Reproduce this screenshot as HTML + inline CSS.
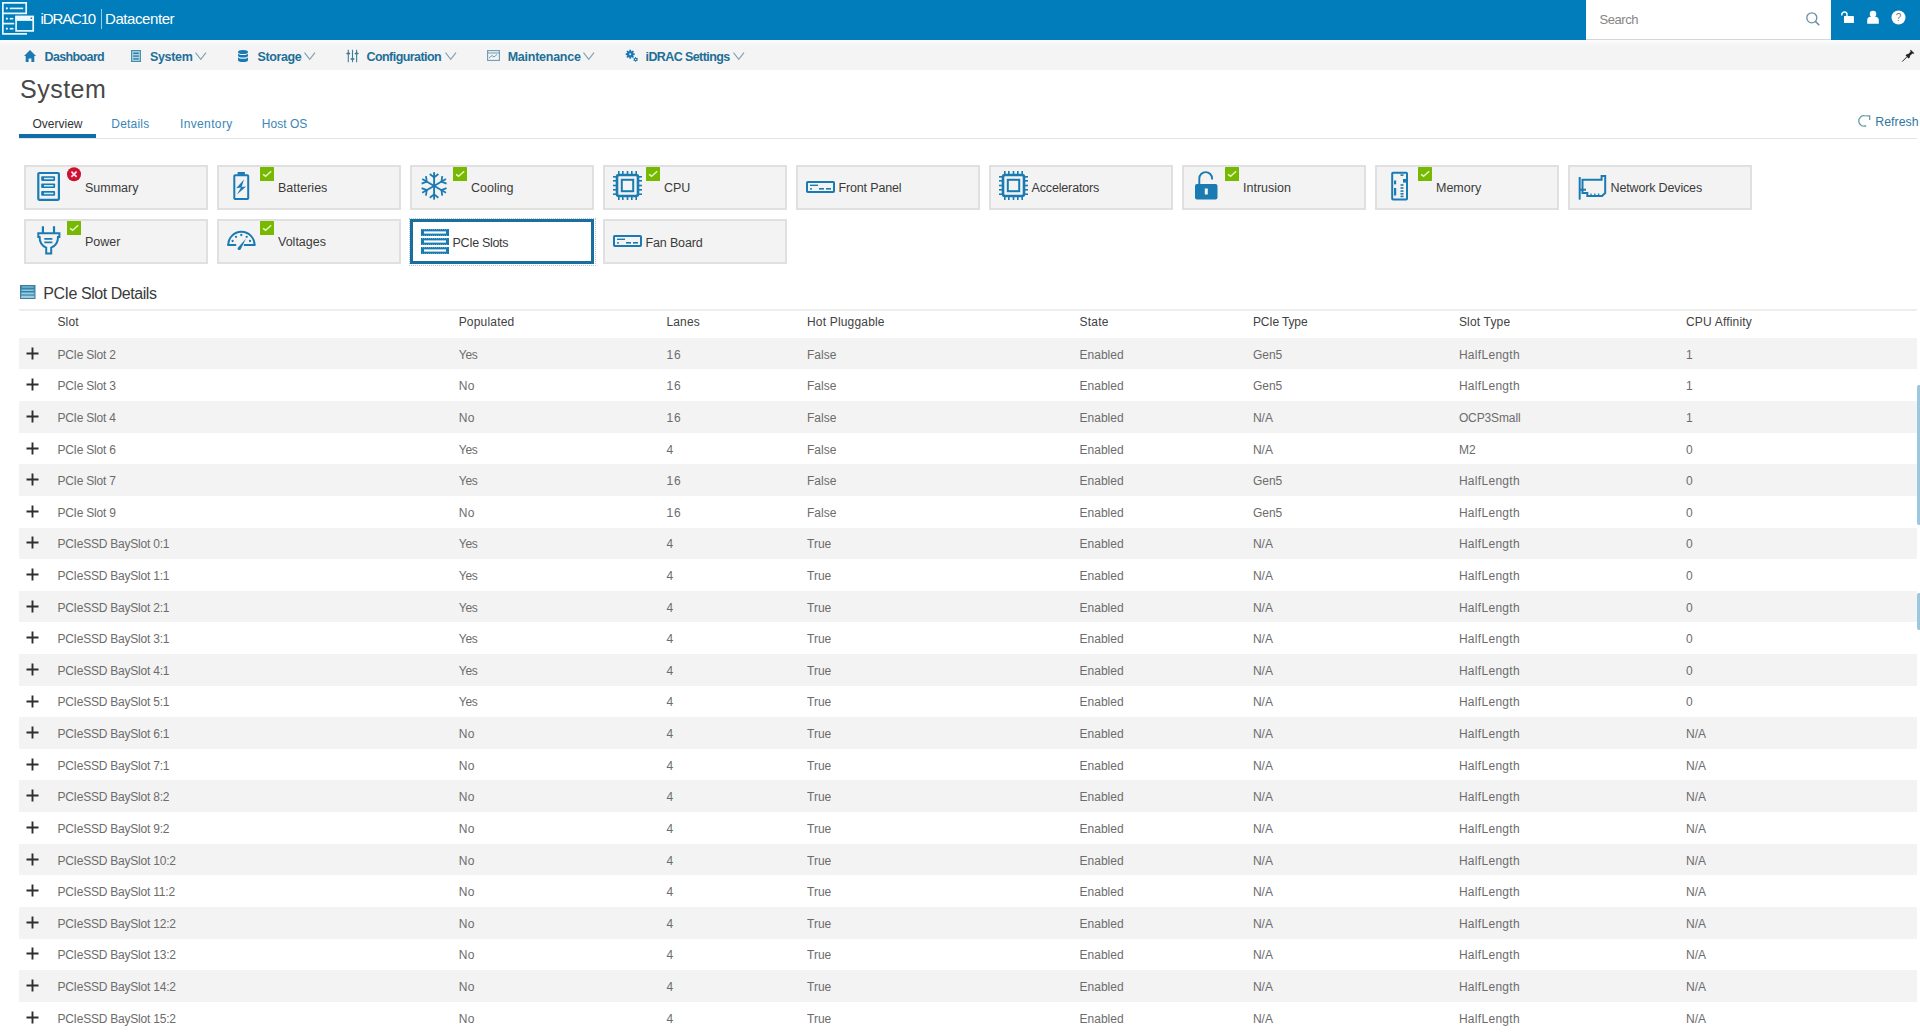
<!DOCTYPE html>
<html><head><meta charset="utf-8"><title>iDRAC10 System</title>
<style>
html,body{margin:0;padding:0;}
body{width:1920px;height:1035px;overflow:hidden;position:relative;background:#fff;font-family:"Liberation Sans", sans-serif;}
.t{position:absolute;white-space:nowrap;line-height:1;}
svg{overflow:visible}
</style></head><body>
<div style="position:absolute;left:0px;top:0px;width:1920px;height:40px;background:#017dbb"></div>
<svg style="position:absolute;left:2px;top:2px" width="34" height="34" viewBox="0 0 34 34"><g fill="none" stroke="#eaf8ff" stroke-width="1.7">
<path d="M0.85 11.4 V0.85 H24.2 V11.4 Z"/><path d="M0.85 11.4 V31.9 H25"/><path d="M0.85 21.6 H12.2"/>
<rect x="14.1" y="14.6" width="17.1" height="14.3"/>
</g>
<g fill="#eaf8ff"><rect x="3.9" y="5.4" width="1.9" height="1.9"/><rect x="7.7" y="5.6" width="13.5" height="1.6"/>
<rect x="3.9" y="15.7" width="1.9" height="1.9"/><rect x="7.7" y="15.9" width="3.5" height="1.6"/>
<rect x="3.9" y="25.7" width="1.9" height="1.9"/><rect x="7.7" y="25.9" width="3.8" height="1.6"/>
<rect x="13.3" y="13.8" width="18.7" height="5.1"/></g>
<rect x="28.6" y="15.5" width="1.5" height="1.5" fill="#2a6f96"/></svg>
<div class="t" style="left:40.6px;top:11.30px;font-size:15px;color:#fff;font-weight:400;letter-spacing:-1.15px;">iDRAC10</div>
<div style="position:absolute;left:101px;top:9px;width:1px;height:20px;background:rgba(255,255,255,.6)"></div>
<div class="t" style="left:105px;top:11.30px;font-size:15px;color:#fff;font-weight:400;letter-spacing:-0.42px;">Datacenter</div>
<div style="position:absolute;left:1586px;top:0px;width:245px;height:39px;background:#fff;border-bottom:1px solid #d6d6d6"></div>
<div class="t" style="left:1599.5px;top:13.00px;font-size:13px;color:#858585;font-weight:400;letter-spacing:-0.45px;">Search</div>
<svg style="position:absolute;left:1806px;top:12px" width="14" height="14" viewBox="0 0 14 14"><circle cx="5.8" cy="5.8" r="5" fill="none" stroke="#6a8fa3" stroke-width="1.3"/><path d="M9.4 9.4 L13.3 13.3" stroke="#6a8fa3" stroke-width="1.5"/></svg>
<svg style="position:absolute;left:1840px;top:11px" width="15" height="13" viewBox="0 0 15 13"><path d="M1.8 4.5 V3.6 a2.6 2.6 0 0 1 5.2 0 V5.5" fill="none" stroke="#fff" stroke-width="1.4"/><rect x="4" y="5.1" width="9.9" height="6.9" rx="0.6" fill="#fff"/></svg>
<svg style="position:absolute;left:1867px;top:10px" width="12" height="14" viewBox="0 0 12 14"><circle cx="6" cy="3.9" r="3.25" fill="#fff"/><path d="M0.2 13.8 V10.3 a3.6 3.6 0 0 1 3.6 -3.6 h4.4 a3.6 3.6 0 0 1 3.6 3.6 V13.8z" fill="#fff"/></svg>
<svg style="position:absolute;left:1891px;top:10px" width="15" height="15" viewBox="0 0 15 15"><circle cx="7.5" cy="7.5" r="7" fill="#fff"/><text x="7.5" y="11.3" text-anchor="middle" font-family="Liberation Sans" font-size="10" font-weight="400" fill="#7a7a7a">?</text></svg>
<div style="position:absolute;left:0px;top:40px;width:1920px;height:30px;background:linear-gradient(#fbfdfe 0px,#f7f8f9 3px,#f4f4f4 6px)"></div>
<svg style="position:absolute;left:24px;top:50px" width="12" height="12" viewBox="0 0 12 12"><path d="M6 0 L12 6 H10.3 V12 H7.4 V8.4 H4.6 V12 H1.7 V6 H0 Z" fill="#1a78b4"/></svg>
<div class="t" style="left:44.5px;top:51.22px;font-size:12.5px;color:#216e98;font-weight:700;letter-spacing:-0.63px;">Dashboard</div>
<svg style="position:absolute;left:131px;top:50px" width="10" height="12" viewBox="0 0 10 12"><rect x="0.6" y="0.6" width="8.8" height="10.8" fill="#b4def0" stroke="#4a8fa8" stroke-width="1.2"/><rect x="2.2" y="2.5" width="5.6" height="1.6" fill="#2f7f98"/><rect x="2.2" y="5.3" width="5.6" height="1.6" fill="#4a7fb8"/><rect x="2.2" y="8.1" width="5.6" height="1.6" fill="#2f8f98"/></svg>
<div class="t" style="left:150px;top:51.22px;font-size:12.5px;color:#216e98;font-weight:700;letter-spacing:-0.34px;">System</div>
<svg style="position:absolute;left:195px;top:52px" width="12" height="9" viewBox="0 0 12 9"><path d="M0.5 0.6 L5.75 7.4 L11 0.6" fill="none" stroke="#7f9fb2" stroke-width="1.1"/></svg>
<svg style="position:absolute;left:238px;top:50px" width="10" height="12" viewBox="0 0 10 12"><ellipse cx="5" cy="2" rx="5" ry="2" fill="#1a78b4"/><path d="M0 3 V5.5 a5 2 0 0 0 10 0 V3 a5 2 0 0 1 -10 0z" fill="#1a78b4"/><path d="M0 6.8 V10 a5 2 0 0 0 10 0 V6.8 a5 2 0 0 1 -10 0z" fill="#1a78b4"/></svg>
<div class="t" style="left:257.5px;top:51.22px;font-size:12.5px;color:#216e98;font-weight:700;letter-spacing:-0.38px;">Storage</div>
<svg style="position:absolute;left:304px;top:52px" width="12" height="9" viewBox="0 0 12 9"><path d="M0.5 0.6 L5.75 7.4 L11 0.6" fill="none" stroke="#7f9fb2" stroke-width="1.1"/></svg>
<svg style="position:absolute;left:346px;top:49px" width="13" height="14" viewBox="0 0 13 14"><g stroke="#3f7d96" stroke-width="1.1"><path d="M2.3 0.8 V13.2"/><path d="M6.5 0.8 V13.2"/><path d="M10.6 0.8 V13.2"/></g><g fill="#3f7d96"><ellipse cx="2.3" cy="4.5" rx="2.1" ry="1.1"/><ellipse cx="6.5" cy="10" rx="2.1" ry="1.1"/><ellipse cx="10.6" cy="4.5" rx="2.1" ry="1.1"/></g></svg>
<div class="t" style="left:366.5px;top:51.22px;font-size:12.5px;color:#216e98;font-weight:700;letter-spacing:-0.56px;">Configuration</div>
<svg style="position:absolute;left:445px;top:52px" width="12" height="9" viewBox="0 0 12 9"><path d="M0.5 0.6 L5.75 7.4 L11 0.6" fill="none" stroke="#7f9fb2" stroke-width="1.1"/></svg>
<svg style="position:absolute;left:487px;top:50px" width="13" height="11" viewBox="0 0 13 11"><rect x="0.6" y="0.6" width="11.8" height="9.8" fill="none" stroke="#6b9ab6" stroke-width="1.1"/><path d="M0.6 3 H12.4" stroke="#6b9ab6" stroke-width="1"/><path d="M2 8 L5 5.5 L7 7 L10 4.5" fill="none" stroke="#6b9ab6" stroke-width="1"/></svg>
<div class="t" style="left:507.7px;top:51.22px;font-size:12.5px;color:#216e98;font-weight:700;letter-spacing:-0.25px;">Maintenance</div>
<svg style="position:absolute;left:583px;top:52px" width="12" height="9" viewBox="0 0 12 9"><path d="M0.5 0.6 L5.75 7.4 L11 0.6" fill="none" stroke="#7f9fb2" stroke-width="1.1"/></svg>
<svg style="position:absolute;left:625px;top:49px" width="14" height="14" viewBox="0 0 14 14"><circle cx="5.2" cy="5.2" r="3.3" fill="#1a78b4"/><rect x="4.30" y="0.70" width="1.8" height="1.6" fill="#1a78b4" transform="rotate(0.0 5.2 5.2)"/><rect x="4.30" y="0.70" width="1.8" height="1.6" fill="#1a78b4" transform="rotate(45.0 5.2 5.2)"/><rect x="4.30" y="0.70" width="1.8" height="1.6" fill="#1a78b4" transform="rotate(90.0 5.2 5.2)"/><rect x="4.30" y="0.70" width="1.8" height="1.6" fill="#1a78b4" transform="rotate(135.0 5.2 5.2)"/><rect x="4.30" y="0.70" width="1.8" height="1.6" fill="#1a78b4" transform="rotate(180.0 5.2 5.2)"/><rect x="4.30" y="0.70" width="1.8" height="1.6" fill="#1a78b4" transform="rotate(225.0 5.2 5.2)"/><rect x="4.30" y="0.70" width="1.8" height="1.6" fill="#1a78b4" transform="rotate(270.0 5.2 5.2)"/><rect x="4.30" y="0.70" width="1.8" height="1.6" fill="#1a78b4" transform="rotate(315.0 5.2 5.2)"/><circle cx="5.2" cy="5.2" r="1.0" fill="#f4f4f4"/><circle cx="10.6" cy="10.4" r="1.7" fill="#1a78b4"/><rect x="10.05" y="8.10" width="1.1" height="1.0" fill="#1a78b4" transform="rotate(0.0 10.6 10.4)"/><rect x="10.05" y="8.10" width="1.1" height="1.0" fill="#1a78b4" transform="rotate(60.0 10.6 10.4)"/><rect x="10.05" y="8.10" width="1.1" height="1.0" fill="#1a78b4" transform="rotate(120.0 10.6 10.4)"/><rect x="10.05" y="8.10" width="1.1" height="1.0" fill="#1a78b4" transform="rotate(180.0 10.6 10.4)"/><rect x="10.05" y="8.10" width="1.1" height="1.0" fill="#1a78b4" transform="rotate(240.0 10.6 10.4)"/><rect x="10.05" y="8.10" width="1.1" height="1.0" fill="#1a78b4" transform="rotate(300.0 10.6 10.4)"/><circle cx="10.6" cy="10.4" r="0.6" fill="#f4f4f4"/></svg>
<div class="t" style="left:645.5px;top:51.22px;font-size:12.5px;color:#216e98;font-weight:700;letter-spacing:-0.59px;">iDRAC Settings</div>
<svg style="position:absolute;left:733px;top:52px" width="12" height="9" viewBox="0 0 12 9"><path d="M0.5 0.6 L5.75 7.4 L11 0.6" fill="none" stroke="#7f9fb2" stroke-width="1.1"/></svg>
<svg style="position:absolute;left:1901px;top:48px" width="15" height="15" viewBox="0 0 15 15"><path d="M1.2 13.6 L6.4 8.4" stroke="#262626" stroke-width="1"/><path d="M4.6 7.4 L7.6 10.4 L8.6 9.8 L9.2 7.4 L11.6 5.4 L12.8 5.8 L13.3 5.2 L9.8 1.7 L9.2 2.2 L9.6 3.4 L7.6 5.8 L5.2 6.4 Z" fill="#262626"/></svg>
<div class="t" style="left:20px;top:77.14px;font-size:25px;color:#484848;font-weight:400;letter-spacing:0.5px;">System</div>
<div class="t" style="left:32.5px;top:118.14px;font-size:12px;color:#333;font-weight:400;letter-spacing:0px;">Overview</div>
<div class="t" style="left:111.3px;top:118.14px;font-size:12px;color:#3b86b6;font-weight:400;letter-spacing:0.2px;">Details</div>
<div class="t" style="left:180px;top:118.14px;font-size:12px;color:#3b86b6;font-weight:400;letter-spacing:0.36px;">Inventory</div>
<div class="t" style="left:261.7px;top:118.14px;font-size:12px;color:#3b86b6;font-weight:400;letter-spacing:0.05px;">Host OS</div>
<div style="position:absolute;left:19px;top:138px;width:1898px;height:1px;background:#e4e4e4"></div>
<div style="position:absolute;left:19px;top:134px;width:77px;height:4px;background:#0e6fa8"></div>
<svg style="position:absolute;left:1857px;top:114px" width="15" height="14" viewBox="0 0 15 14"><path d="M9.2 11.6 A5.2 5.2 0 1 1 8.3 1.9" fill="none" stroke="#6b9aab" stroke-width="1.3"/><path d="M8.6 1.9 H12.7 V5.9" fill="none" stroke="#6b9aab" stroke-width="1.3"/></svg>
<div class="t" style="left:1875.3px;top:115.79px;font-size:12.3px;color:#2f77a0;font-weight:400;letter-spacing:0.05px;">Refresh</div>
<div style="position:absolute;left:24px;top:165px;width:184px;height:45px;box-sizing:border-box;border:2px solid #e0e0e0;background:#f3f3f3"></div>
<svg style="position:absolute;left:37px;top:171px" width="24" height="30" viewBox="0 0 24 30"><rect x="1.3" y="2" width="20.6" height="26.8" rx="1" fill="none" stroke="#1a7bb2" stroke-width="2.2"/><rect x="4.2" y="5.2" width="13.9" height="4.7" rx="0.8" fill="#1a7bb2"/><rect x="7" y="6.800000000000001" width="9.4" height="1.5" fill="#c9eefc"/><rect x="4.2" y="12.4" width="13.9" height="4.7" rx="0.8" fill="#1a7bb2"/><rect x="7" y="14.0" width="9.4" height="1.5" fill="#c9eefc"/><rect x="4.2" y="20.1" width="13.9" height="4.7" rx="0.8" fill="#1a7bb2"/><rect x="7" y="21.700000000000003" width="9.4" height="1.5" fill="#c9eefc"/></svg>
<svg style="position:absolute;left:66.6px;top:166.8px" width="15" height="15" viewBox="0 0 15 15"><circle cx="7" cy="7.3" r="7" fill="#cc1230"/><path d="M4.4 4.7 L9.6 9.9 M9.6 4.7 L4.4 9.9" stroke="#fde" stroke-width="1.8"/></svg>
<div class="t" style="left:85px;top:181.62px;font-size:12.5px;color:#3a3a3a;font-weight:400;letter-spacing:0px;">Summary</div>
<div style="position:absolute;left:217px;top:165px;width:184px;height:45px;box-sizing:border-box;border:2px solid #e0e0e0;background:#f3f3f3"></div>
<svg style="position:absolute;left:232px;top:171px" width="19" height="30" viewBox="0 0 19 30"><rect x="5.6" y="1" width="7.3" height="2.8" fill="#1a7bb2"/><rect x="2.3" y="4.3" width="13.9" height="23.7" rx="0.8" fill="none" stroke="#1a7bb2" stroke-width="2"/><path d="M12 8.6 L4.2 17.2 L9 16.4 L5 23.6 L14.1 15.4 L9.6 16 Z" fill="#1a7bb2"/></svg>
<svg style="position:absolute;left:259.6px;top:166.8px" width="14" height="14" viewBox="0 0 14 14"><rect width="14" height="14" rx="0.5" fill="#76b900"/><path d="M3.1 7.3 L5.6 9.2 L11.2 4.3" fill="none" stroke="#e4f7c4" stroke-width="1.5"/></svg>
<div class="t" style="left:278px;top:181.62px;font-size:12.5px;color:#3a3a3a;font-weight:400;letter-spacing:0px;">Batteries</div>
<div style="position:absolute;left:410px;top:165px;width:184px;height:45px;box-sizing:border-box;border:2px solid #e0e0e0;background:#f3f3f3"></div>
<svg style="position:absolute;left:420px;top:171px" width="29" height="30" viewBox="0 0 29 30"><g transform="rotate(0 14.1 14.9)"><path d="M14.1 1.2 V28.6" stroke="#1a7bb2" stroke-width="1.9"/><path d="M9.8 3 L14.1 6.4 L18.4 3 M9.8 26.8 L14.1 23.4 L18.4 26.8" fill="none" stroke="#1a7bb2" stroke-width="1.8"/></g><g transform="rotate(60 14.1 14.9)"><path d="M14.1 1.2 V28.6" stroke="#1a7bb2" stroke-width="1.9"/><path d="M9.8 3 L14.1 6.4 L18.4 3 M9.8 26.8 L14.1 23.4 L18.4 26.8" fill="none" stroke="#1a7bb2" stroke-width="1.8"/></g><g transform="rotate(120 14.1 14.9)"><path d="M14.1 1.2 V28.6" stroke="#1a7bb2" stroke-width="1.9"/><path d="M9.8 3 L14.1 6.4 L18.4 3 M9.8 26.8 L14.1 23.4 L18.4 26.8" fill="none" stroke="#1a7bb2" stroke-width="1.8"/></g></svg>
<svg style="position:absolute;left:452.6px;top:166.8px" width="14" height="14" viewBox="0 0 14 14"><rect width="14" height="14" rx="0.5" fill="#76b900"/><path d="M3.1 7.3 L5.6 9.2 L11.2 4.3" fill="none" stroke="#e4f7c4" stroke-width="1.5"/></svg>
<div class="t" style="left:471px;top:181.62px;font-size:12.5px;color:#3a3a3a;font-weight:400;letter-spacing:0px;">Cooling</div>
<div style="position:absolute;left:603px;top:165px;width:184px;height:45px;box-sizing:border-box;border:2px solid #e0e0e0;background:#f3f3f3"></div>
<svg style="position:absolute;left:612.5px;top:171px" width="29" height="29" viewBox="0 0 29 29"><rect x="5" y="0" width="1.6" height="3" fill="#1a7bb2"/><rect x="5" y="26" width="1.6" height="3" fill="#1a7bb2"/><rect x="0" y="5" width="3" height="1.6" fill="#1a7bb2"/><rect x="26" y="5" width="3" height="1.6" fill="#1a7bb2"/><rect x="9" y="0" width="1.6" height="3" fill="#1a7bb2"/><rect x="9" y="26" width="1.6" height="3" fill="#1a7bb2"/><rect x="0" y="9" width="3" height="1.6" fill="#1a7bb2"/><rect x="26" y="9" width="3" height="1.6" fill="#1a7bb2"/><rect x="13.7" y="0" width="1.6" height="3" fill="#1a7bb2"/><rect x="13.7" y="26" width="1.6" height="3" fill="#1a7bb2"/><rect x="0" y="13.7" width="3" height="1.6" fill="#1a7bb2"/><rect x="26" y="13.7" width="3" height="1.6" fill="#1a7bb2"/><rect x="18" y="0" width="1.6" height="3" fill="#1a7bb2"/><rect x="18" y="26" width="1.6" height="3" fill="#1a7bb2"/><rect x="0" y="18" width="3" height="1.6" fill="#1a7bb2"/><rect x="26" y="18" width="3" height="1.6" fill="#1a7bb2"/><rect x="22.4" y="0" width="1.6" height="3" fill="#1a7bb2"/><rect x="22.4" y="26" width="1.6" height="3" fill="#1a7bb2"/><rect x="0" y="22.4" width="3" height="1.6" fill="#1a7bb2"/><rect x="26" y="22.4" width="3" height="1.6" fill="#1a7bb2"/><rect x="4" y="4" width="21" height="21" rx="2" fill="none" stroke="#1a7bb2" stroke-width="2.6"/><rect x="8.8" y="8.8" width="11.4" height="11.4" fill="none" stroke="#1a7bb2" stroke-width="2"/></svg>
<svg style="position:absolute;left:645.6px;top:166.8px" width="14" height="14" viewBox="0 0 14 14"><rect width="14" height="14" rx="0.5" fill="#76b900"/><path d="M3.1 7.3 L5.6 9.2 L11.2 4.3" fill="none" stroke="#e4f7c4" stroke-width="1.5"/></svg>
<div class="t" style="left:664px;top:181.62px;font-size:12.5px;color:#3a3a3a;font-weight:400;letter-spacing:0px;">CPU</div>
<div style="position:absolute;left:796px;top:165px;width:184px;height:45px;box-sizing:border-box;border:2px solid #e0e0e0;background:#f3f3f3"></div>
<svg style="position:absolute;left:805.5px;top:180.5px" width="29" height="12" viewBox="0 0 29 12"><rect x="1" y="1" width="27" height="10" rx="0.8" fill="none" stroke="#1a7bb2" stroke-width="2"/><rect x="4" y="3.6" width="8" height="1.4" fill="#1a7bb2"/><rect x="4" y="7.2" width="2" height="1.4" fill="#1a7bb2"/><rect x="13" y="7" width="5" height="1.6" fill="#1a7bb2"/><rect x="20" y="7" width="5" height="1.6" fill="#1a7bb2"/></svg>
<div class="t" style="left:838.5px;top:182.02px;font-size:12.5px;color:#3a3a3a;font-weight:400;letter-spacing:-0.15px;">Front Panel</div>
<div style="position:absolute;left:989px;top:165px;width:184px;height:45px;box-sizing:border-box;border:2px solid #e0e0e0;background:#f3f3f3"></div>
<svg style="position:absolute;left:998.5px;top:171px" width="29" height="29" viewBox="0 0 29 29"><rect x="5" y="0" width="1.6" height="3" fill="#1a7bb2"/><rect x="5" y="26" width="1.6" height="3" fill="#1a7bb2"/><rect x="0" y="5" width="3" height="1.6" fill="#1a7bb2"/><rect x="26" y="5" width="3" height="1.6" fill="#1a7bb2"/><rect x="9" y="0" width="1.6" height="3" fill="#1a7bb2"/><rect x="9" y="26" width="1.6" height="3" fill="#1a7bb2"/><rect x="0" y="9" width="3" height="1.6" fill="#1a7bb2"/><rect x="26" y="9" width="3" height="1.6" fill="#1a7bb2"/><rect x="13.7" y="0" width="1.6" height="3" fill="#1a7bb2"/><rect x="13.7" y="26" width="1.6" height="3" fill="#1a7bb2"/><rect x="0" y="13.7" width="3" height="1.6" fill="#1a7bb2"/><rect x="26" y="13.7" width="3" height="1.6" fill="#1a7bb2"/><rect x="18" y="0" width="1.6" height="3" fill="#1a7bb2"/><rect x="18" y="26" width="1.6" height="3" fill="#1a7bb2"/><rect x="0" y="18" width="3" height="1.6" fill="#1a7bb2"/><rect x="26" y="18" width="3" height="1.6" fill="#1a7bb2"/><rect x="22.4" y="0" width="1.6" height="3" fill="#1a7bb2"/><rect x="22.4" y="26" width="1.6" height="3" fill="#1a7bb2"/><rect x="0" y="22.4" width="3" height="1.6" fill="#1a7bb2"/><rect x="26" y="22.4" width="3" height="1.6" fill="#1a7bb2"/><rect x="4" y="4" width="21" height="21" rx="2" fill="none" stroke="#1a7bb2" stroke-width="2.6"/><rect x="8.8" y="8.8" width="11.4" height="11.4" fill="none" stroke="#1a7bb2" stroke-width="2"/></svg>
<div class="t" style="left:1031.5px;top:182.02px;font-size:12.5px;color:#3a3a3a;font-weight:400;letter-spacing:-0.15px;">Accelerators</div>
<div style="position:absolute;left:1182px;top:165px;width:184px;height:45px;box-sizing:border-box;border:2px solid #e0e0e0;background:#f3f3f3"></div>
<svg style="position:absolute;left:1194.5px;top:171px" width="23" height="29" viewBox="0 0 23 29"><path d="M4.3 13 V7.5 a6.4 6.4 0 0 1 12.8 0 V8.5" fill="none" stroke="#1a7bb2" stroke-width="1.9"/><rect x="0" y="13" width="22.5" height="15.5" rx="2" fill="#1a7bb2"/><rect x="9.8" y="17.5" width="3" height="6" fill="#f3f3f3"/></svg>
<svg style="position:absolute;left:1224.6px;top:166.8px" width="14" height="14" viewBox="0 0 14 14"><rect width="14" height="14" rx="0.5" fill="#76b900"/><path d="M3.1 7.3 L5.6 9.2 L11.2 4.3" fill="none" stroke="#e4f7c4" stroke-width="1.5"/></svg>
<div class="t" style="left:1243px;top:181.62px;font-size:12.5px;color:#3a3a3a;font-weight:400;letter-spacing:0px;">Intrusion</div>
<div style="position:absolute;left:1375px;top:165px;width:184px;height:45px;box-sizing:border-box;border:2px solid #e0e0e0;background:#f3f3f3"></div>
<svg style="position:absolute;left:1391px;top:171px" width="17" height="30" viewBox="0 0 17 30"><rect x="1.2" y="1.8" width="14.8" height="26.8" rx="0.8" fill="none" stroke="#1a7bb2" stroke-width="2"/><rect x="9.5" y="3.3" width="3" height="1.6" fill="#1a7bb2"/><rect x="12" y="8" width="3" height="3.6" fill="#1a7bb2"/><rect x="9.5" y="13.2" width="3" height="1.6" fill="#1a7bb2"/><rect x="9.5" y="16.2" width="3" height="1.6" fill="#1a7bb2"/><rect x="9.5" y="19.3" width="3" height="1.6" fill="#1a7bb2"/><rect x="9.5" y="22" width="3" height="1.6" fill="#1a7bb2"/><rect x="9.5" y="24.6" width="3" height="1.6" fill="#1a7bb2"/><rect x="3" y="9.5" width="2.2" height="3.8" fill="#1a7bb2"/><rect x="3" y="17" width="2.2" height="7.5" fill="#1a7bb2"/></svg>
<svg style="position:absolute;left:1417.6px;top:166.8px" width="14" height="14" viewBox="0 0 14 14"><rect width="14" height="14" rx="0.5" fill="#76b900"/><path d="M3.1 7.3 L5.6 9.2 L11.2 4.3" fill="none" stroke="#e4f7c4" stroke-width="1.5"/></svg>
<div class="t" style="left:1436px;top:181.62px;font-size:12.5px;color:#3a3a3a;font-weight:400;letter-spacing:0px;">Memory</div>
<div style="position:absolute;left:1568px;top:165px;width:184px;height:45px;box-sizing:border-box;border:2px solid #e0e0e0;background:#f3f3f3"></div>
<svg style="position:absolute;left:1577px;top:174px" width="32" height="28" viewBox="0 0 32 28"><path d="M2.7 3 V25.6" stroke="#1a7bb2" stroke-width="2"/><path d="M5.5 5.7 H24.6 V1.9 H28.2 V19 L25 22 H10.3 V19 H5.5 Z" fill="none" stroke="#1a7bb2" stroke-width="2"/><path d="M3 15.7 H9" stroke="#1a7bb2" stroke-width="2"/><path d="M14 19.6 V21 M17.8 19.6 V21 M21.6 19.6 V21" stroke="#1a7bb2" stroke-width="1.3"/></svg>
<div class="t" style="left:1610.5px;top:182.02px;font-size:12.5px;color:#3a3a3a;font-weight:400;letter-spacing:-0.15px;">Network Devices</div>
<div style="position:absolute;left:24px;top:219px;width:184px;height:45px;box-sizing:border-box;border:2px solid #e0e0e0;background:#f3f3f3"></div>
<svg style="position:absolute;left:37px;top:225px" width="24" height="30" viewBox="0 0 24 30"><path d="M5.9 1.2 V8.5 M17 1.2 V8.5" stroke="#1a7bb2" stroke-width="2.2"/><path d="M1.3 8.3 H22.4 V12 H21 Q21 20 14.2 22.6 V28.6 H9.2 V22.6 Q2.6 20 2.6 12 H1.3 Z" fill="none" stroke="#1a7bb2" stroke-width="2"/><path d="M7.3 13.9 H15.4 M7.3 17.4 H15.4" stroke="#1a7bb2" stroke-width="1.8"/></svg>
<svg style="position:absolute;left:66.6px;top:220.8px" width="14" height="14" viewBox="0 0 14 14"><rect width="14" height="14" rx="0.5" fill="#76b900"/><path d="M3.1 7.3 L5.6 9.2 L11.2 4.3" fill="none" stroke="#e4f7c4" stroke-width="1.5"/></svg>
<div class="t" style="left:85px;top:236.12px;font-size:12.5px;color:#3a3a3a;font-weight:400;letter-spacing:0px;">Power</div>
<div style="position:absolute;left:217px;top:219px;width:184px;height:45px;box-sizing:border-box;border:2px solid #e0e0e0;background:#f3f3f3"></div>
<svg style="position:absolute;left:226px;top:229px" width="32" height="24" viewBox="0 0 32 24"><path d="M2.3 15.9 A13.1 13.1 0 0 1 28.5 15.9" fill="none" stroke="#1a7bb2" stroke-width="2"/><path d="M1.3 15.9 H10.2 M17.9 15.9 H29.5" stroke="#1a7bb2" stroke-width="2"/><circle cx="6.6" cy="12" r="1.15" fill="#1a7bb2"/><circle cx="10" cy="7.8" r="1.15" fill="#1a7bb2"/><circle cx="15.3" cy="6" r="1.15" fill="#1a7bb2"/><circle cx="20.7" cy="7.8" r="1.15" fill="#1a7bb2"/><circle cx="24" cy="12" r="1.15" fill="#1a7bb2"/><path d="M20 9.6 L14.6 20.4 A1.7 1.7 0 0 1 11.6 19 Z" fill="#1a7bb2"/></svg>
<svg style="position:absolute;left:259.6px;top:220.8px" width="14" height="14" viewBox="0 0 14 14"><rect width="14" height="14" rx="0.5" fill="#76b900"/><path d="M3.1 7.3 L5.6 9.2 L11.2 4.3" fill="none" stroke="#e4f7c4" stroke-width="1.5"/></svg>
<div class="t" style="left:278px;top:236.12px;font-size:12.5px;color:#3a3a3a;font-weight:400;letter-spacing:0px;">Voltages</div>
<div style="position:absolute;left:408.5px;top:217.5px;width:187px;height:48px;box-sizing:border-box;border:1px dotted #a9c9dc"></div>
<div style="position:absolute;left:410px;top:219px;width:184px;height:45px;box-sizing:border-box;border:3px solid #1a6d9c;background:#fff"></div>
<svg style="position:absolute;left:421px;top:228.5px" width="28" height="25" viewBox="0 0 28 25"><path d="M0 0 H28 V7 H0 Z" fill="#1a7bb2"/><rect x="3" y="2.4" width="22" height="2.2" fill="#fff"/><path d="M1 0.5 h26 M1 6.5 h26" stroke="#79b8dc" stroke-width="0.7" stroke-dasharray="1 1"/><path d="M0 9 H28 V16 H0 Z" fill="#1a7bb2"/><rect x="3" y="11.4" width="22" height="2.2" fill="#fff"/><path d="M1 9.5 h26 M1 15.5 h26" stroke="#79b8dc" stroke-width="0.7" stroke-dasharray="1 1"/><path d="M0 18 H28 V25 H0 Z" fill="#1a7bb2"/><rect x="3" y="20.4" width="22" height="2.2" fill="#fff"/><path d="M1 18.5 h26 M1 24.5 h26" stroke="#79b8dc" stroke-width="0.7" stroke-dasharray="1 1"/></svg>
<div class="t" style="left:452.5px;top:236.72px;font-size:12.5px;color:#3a3a3a;font-weight:400;letter-spacing:-0.35px;">PCIe Slots</div>
<div style="position:absolute;left:603px;top:219px;width:184px;height:45px;box-sizing:border-box;border:2px solid #e0e0e0;background:#f3f3f3"></div>
<svg style="position:absolute;left:612.5px;top:234.5px" width="29" height="12" viewBox="0 0 29 12"><rect x="1" y="1" width="27" height="10" rx="0.8" fill="none" stroke="#1a7bb2" stroke-width="2"/><rect x="4" y="3.6" width="8" height="1.4" fill="#1a7bb2"/><rect x="4" y="7.2" width="2" height="1.4" fill="#1a7bb2"/><rect x="13" y="7" width="5" height="1.6" fill="#1a7bb2"/><rect x="20" y="7" width="5" height="1.6" fill="#1a7bb2"/></svg>
<div class="t" style="left:645.5px;top:236.72px;font-size:12.5px;color:#3a3a3a;font-weight:400;letter-spacing:-0.15px;">Fan Board</div>
<svg style="position:absolute;left:19.5px;top:285px" width="15.5" height="14" viewBox="0 0 15.5 14"><defs><linearGradient id="sg" x1="0" y1="0" x2="0" y2="1"><stop offset="0" stop-color="#2f86ad"/><stop offset="1" stop-color="#9fcbe0"/></linearGradient></defs><rect x="0.5" y="0.5" width="14.5" height="13" fill="url(#sg)" stroke="#3f7f9c" stroke-width="1"/><path d="M1 3.2 H14.5 M1 6.6 H14.5 M1 10 H14.5" stroke="#2c789c" stroke-width="0.9"/><path d="M2 2 H13.5 M2 5.3 H13.5 M2 8.7 H13.5 M2 11.8 H13.5" stroke="#a8dcf2" stroke-width="0.8"/></svg>
<div class="t" style="left:43.2px;top:285.56px;font-size:16px;color:#3a3a3a;font-weight:400;letter-spacing:-0.45px;">PCIe Slot Details</div>
<div style="position:absolute;left:19px;top:309px;width:1898px;height:2px;background:#eeeeee"></div>
<div class="t" style="left:57.4px;top:316.09px;font-size:12px;color:#424242;font-weight:400;letter-spacing:0.18px;">Slot</div>
<div class="t" style="left:458.7px;top:316.09px;font-size:12px;color:#424242;font-weight:400;letter-spacing:0.18px;">Populated</div>
<div class="t" style="left:666.4px;top:316.09px;font-size:12px;color:#424242;font-weight:400;letter-spacing:0.18px;">Lanes</div>
<div class="t" style="left:807px;top:316.09px;font-size:12px;color:#424242;font-weight:400;letter-spacing:0.18px;">Hot Pluggable</div>
<div class="t" style="left:1079.6px;top:316.09px;font-size:12px;color:#424242;font-weight:400;letter-spacing:0.18px;">State</div>
<div class="t" style="left:1252.9px;top:316.09px;font-size:12px;color:#424242;font-weight:400;letter-spacing:-0.14px;">PCIe Type</div>
<div class="t" style="left:1458.9px;top:316.09px;font-size:12px;color:#424242;font-weight:400;letter-spacing:0.18px;">Slot Type</div>
<div class="t" style="left:1686px;top:316.09px;font-size:12px;color:#424242;font-weight:400;letter-spacing:0.18px;">CPU Affinity</div>
<div style="position:absolute;left:19px;top:337.80px;width:1898px;height:31.62px;background:#f3f3f3"></div>
<svg style="position:absolute;left:26px;top:346.70px" width="13" height="13" viewBox="0 0 13 13"><path d="M6.5 0.5 V12.5 M0.5 6.5 H12.5" stroke="#2e2e2e" stroke-width="1.9"/></svg>
<div class="t" style="left:57.4px;top:348.64px;font-size:12px;color:#6c6c6c;font-weight:400;letter-spacing:-0.22px;">PCIe Slot 2</div>
<div class="t" style="left:458.7px;top:348.64px;font-size:12px;color:#6c6c6c;font-weight:400;letter-spacing:-0.2px;">Yes</div>
<div class="t" style="left:666.4px;top:348.64px;font-size:12px;color:#6c6c6c;font-weight:400;letter-spacing:0.9px;">16</div>
<div class="t" style="left:807px;top:348.64px;font-size:12px;color:#6c6c6c;font-weight:400;letter-spacing:0px;">False</div>
<div class="t" style="left:1079.6px;top:348.64px;font-size:12px;color:#6c6c6c;font-weight:400;letter-spacing:0px;">Enabled</div>
<div class="t" style="left:1252.9px;top:348.64px;font-size:12px;color:#6c6c6c;font-weight:400;letter-spacing:0px;">Gen5</div>
<div class="t" style="left:1458.9px;top:348.64px;font-size:12px;color:#6c6c6c;font-weight:400;letter-spacing:0.3px;">HalfLength</div>
<div class="t" style="left:1686px;top:348.64px;font-size:12px;color:#6c6c6c;font-weight:400;letter-spacing:0px;">1</div>
<svg style="position:absolute;left:26px;top:378.32px" width="13" height="13" viewBox="0 0 13 13"><path d="M6.5 0.5 V12.5 M0.5 6.5 H12.5" stroke="#2e2e2e" stroke-width="1.9"/></svg>
<div class="t" style="left:57.4px;top:380.26px;font-size:12px;color:#6c6c6c;font-weight:400;letter-spacing:-0.22px;">PCIe Slot 3</div>
<div class="t" style="left:458.7px;top:380.26px;font-size:12px;color:#6c6c6c;font-weight:400;letter-spacing:0.5px;">No</div>
<div class="t" style="left:666.4px;top:380.26px;font-size:12px;color:#6c6c6c;font-weight:400;letter-spacing:0.9px;">16</div>
<div class="t" style="left:807px;top:380.26px;font-size:12px;color:#6c6c6c;font-weight:400;letter-spacing:0px;">False</div>
<div class="t" style="left:1079.6px;top:380.26px;font-size:12px;color:#6c6c6c;font-weight:400;letter-spacing:0px;">Enabled</div>
<div class="t" style="left:1252.9px;top:380.26px;font-size:12px;color:#6c6c6c;font-weight:400;letter-spacing:0px;">Gen5</div>
<div class="t" style="left:1458.9px;top:380.26px;font-size:12px;color:#6c6c6c;font-weight:400;letter-spacing:0.3px;">HalfLength</div>
<div class="t" style="left:1686px;top:380.26px;font-size:12px;color:#6c6c6c;font-weight:400;letter-spacing:0px;">1</div>
<div style="position:absolute;left:19px;top:401.04px;width:1898px;height:31.62px;background:#f3f3f3"></div>
<svg style="position:absolute;left:26px;top:409.94px" width="13" height="13" viewBox="0 0 13 13"><path d="M6.5 0.5 V12.5 M0.5 6.5 H12.5" stroke="#2e2e2e" stroke-width="1.9"/></svg>
<div class="t" style="left:57.4px;top:411.88px;font-size:12px;color:#6c6c6c;font-weight:400;letter-spacing:-0.22px;">PCIe Slot 4</div>
<div class="t" style="left:458.7px;top:411.88px;font-size:12px;color:#6c6c6c;font-weight:400;letter-spacing:0.5px;">No</div>
<div class="t" style="left:666.4px;top:411.88px;font-size:12px;color:#6c6c6c;font-weight:400;letter-spacing:0.9px;">16</div>
<div class="t" style="left:807px;top:411.88px;font-size:12px;color:#6c6c6c;font-weight:400;letter-spacing:0px;">False</div>
<div class="t" style="left:1079.6px;top:411.88px;font-size:12px;color:#6c6c6c;font-weight:400;letter-spacing:0px;">Enabled</div>
<div class="t" style="left:1252.9px;top:411.88px;font-size:12px;color:#6c6c6c;font-weight:400;letter-spacing:0px;">N/A</div>
<div class="t" style="left:1458.9px;top:411.88px;font-size:12px;color:#6c6c6c;font-weight:400;letter-spacing:-0.12px;">OCP3Small</div>
<div class="t" style="left:1686px;top:411.88px;font-size:12px;color:#6c6c6c;font-weight:400;letter-spacing:0px;">1</div>
<svg style="position:absolute;left:26px;top:441.56px" width="13" height="13" viewBox="0 0 13 13"><path d="M6.5 0.5 V12.5 M0.5 6.5 H12.5" stroke="#2e2e2e" stroke-width="1.9"/></svg>
<div class="t" style="left:57.4px;top:443.50px;font-size:12px;color:#6c6c6c;font-weight:400;letter-spacing:-0.22px;">PCIe Slot 6</div>
<div class="t" style="left:458.7px;top:443.50px;font-size:12px;color:#6c6c6c;font-weight:400;letter-spacing:-0.2px;">Yes</div>
<div class="t" style="left:666.4px;top:443.50px;font-size:12px;color:#6c6c6c;font-weight:400;letter-spacing:0px;">4</div>
<div class="t" style="left:807px;top:443.50px;font-size:12px;color:#6c6c6c;font-weight:400;letter-spacing:0px;">False</div>
<div class="t" style="left:1079.6px;top:443.50px;font-size:12px;color:#6c6c6c;font-weight:400;letter-spacing:0px;">Enabled</div>
<div class="t" style="left:1252.9px;top:443.50px;font-size:12px;color:#6c6c6c;font-weight:400;letter-spacing:0px;">N/A</div>
<div class="t" style="left:1458.9px;top:443.50px;font-size:12px;color:#6c6c6c;font-weight:400;letter-spacing:0px;">M2</div>
<div class="t" style="left:1686px;top:443.50px;font-size:12px;color:#6c6c6c;font-weight:400;letter-spacing:0px;">0</div>
<div style="position:absolute;left:19px;top:464.28px;width:1898px;height:31.62px;background:#f3f3f3"></div>
<svg style="position:absolute;left:26px;top:473.18px" width="13" height="13" viewBox="0 0 13 13"><path d="M6.5 0.5 V12.5 M0.5 6.5 H12.5" stroke="#2e2e2e" stroke-width="1.9"/></svg>
<div class="t" style="left:57.4px;top:475.12px;font-size:12px;color:#6c6c6c;font-weight:400;letter-spacing:-0.22px;">PCIe Slot 7</div>
<div class="t" style="left:458.7px;top:475.12px;font-size:12px;color:#6c6c6c;font-weight:400;letter-spacing:-0.2px;">Yes</div>
<div class="t" style="left:666.4px;top:475.12px;font-size:12px;color:#6c6c6c;font-weight:400;letter-spacing:0.9px;">16</div>
<div class="t" style="left:807px;top:475.12px;font-size:12px;color:#6c6c6c;font-weight:400;letter-spacing:0px;">False</div>
<div class="t" style="left:1079.6px;top:475.12px;font-size:12px;color:#6c6c6c;font-weight:400;letter-spacing:0px;">Enabled</div>
<div class="t" style="left:1252.9px;top:475.12px;font-size:12px;color:#6c6c6c;font-weight:400;letter-spacing:0px;">Gen5</div>
<div class="t" style="left:1458.9px;top:475.12px;font-size:12px;color:#6c6c6c;font-weight:400;letter-spacing:0.3px;">HalfLength</div>
<div class="t" style="left:1686px;top:475.12px;font-size:12px;color:#6c6c6c;font-weight:400;letter-spacing:0px;">0</div>
<svg style="position:absolute;left:26px;top:504.80px" width="13" height="13" viewBox="0 0 13 13"><path d="M6.5 0.5 V12.5 M0.5 6.5 H12.5" stroke="#2e2e2e" stroke-width="1.9"/></svg>
<div class="t" style="left:57.4px;top:506.74px;font-size:12px;color:#6c6c6c;font-weight:400;letter-spacing:-0.22px;">PCIe Slot 9</div>
<div class="t" style="left:458.7px;top:506.74px;font-size:12px;color:#6c6c6c;font-weight:400;letter-spacing:0.5px;">No</div>
<div class="t" style="left:666.4px;top:506.74px;font-size:12px;color:#6c6c6c;font-weight:400;letter-spacing:0.9px;">16</div>
<div class="t" style="left:807px;top:506.74px;font-size:12px;color:#6c6c6c;font-weight:400;letter-spacing:0px;">False</div>
<div class="t" style="left:1079.6px;top:506.74px;font-size:12px;color:#6c6c6c;font-weight:400;letter-spacing:0px;">Enabled</div>
<div class="t" style="left:1252.9px;top:506.74px;font-size:12px;color:#6c6c6c;font-weight:400;letter-spacing:0px;">Gen5</div>
<div class="t" style="left:1458.9px;top:506.74px;font-size:12px;color:#6c6c6c;font-weight:400;letter-spacing:0.3px;">HalfLength</div>
<div class="t" style="left:1686px;top:506.74px;font-size:12px;color:#6c6c6c;font-weight:400;letter-spacing:0px;">0</div>
<div style="position:absolute;left:19px;top:527.52px;width:1898px;height:31.62px;background:#f3f3f3"></div>
<svg style="position:absolute;left:26px;top:536.42px" width="13" height="13" viewBox="0 0 13 13"><path d="M6.5 0.5 V12.5 M0.5 6.5 H12.5" stroke="#2e2e2e" stroke-width="1.9"/></svg>
<div class="t" style="left:57.4px;top:538.36px;font-size:12px;color:#6c6c6c;font-weight:400;letter-spacing:-0.22px;">PCIeSSD BaySlot 0:1</div>
<div class="t" style="left:458.7px;top:538.36px;font-size:12px;color:#6c6c6c;font-weight:400;letter-spacing:-0.2px;">Yes</div>
<div class="t" style="left:666.4px;top:538.36px;font-size:12px;color:#6c6c6c;font-weight:400;letter-spacing:0px;">4</div>
<div class="t" style="left:807px;top:538.36px;font-size:12px;color:#6c6c6c;font-weight:400;letter-spacing:0px;">True</div>
<div class="t" style="left:1079.6px;top:538.36px;font-size:12px;color:#6c6c6c;font-weight:400;letter-spacing:0px;">Enabled</div>
<div class="t" style="left:1252.9px;top:538.36px;font-size:12px;color:#6c6c6c;font-weight:400;letter-spacing:0px;">N/A</div>
<div class="t" style="left:1458.9px;top:538.36px;font-size:12px;color:#6c6c6c;font-weight:400;letter-spacing:0.3px;">HalfLength</div>
<div class="t" style="left:1686px;top:538.36px;font-size:12px;color:#6c6c6c;font-weight:400;letter-spacing:0px;">0</div>
<svg style="position:absolute;left:26px;top:568.04px" width="13" height="13" viewBox="0 0 13 13"><path d="M6.5 0.5 V12.5 M0.5 6.5 H12.5" stroke="#2e2e2e" stroke-width="1.9"/></svg>
<div class="t" style="left:57.4px;top:569.98px;font-size:12px;color:#6c6c6c;font-weight:400;letter-spacing:-0.22px;">PCIeSSD BaySlot 1:1</div>
<div class="t" style="left:458.7px;top:569.98px;font-size:12px;color:#6c6c6c;font-weight:400;letter-spacing:-0.2px;">Yes</div>
<div class="t" style="left:666.4px;top:569.98px;font-size:12px;color:#6c6c6c;font-weight:400;letter-spacing:0px;">4</div>
<div class="t" style="left:807px;top:569.98px;font-size:12px;color:#6c6c6c;font-weight:400;letter-spacing:0px;">True</div>
<div class="t" style="left:1079.6px;top:569.98px;font-size:12px;color:#6c6c6c;font-weight:400;letter-spacing:0px;">Enabled</div>
<div class="t" style="left:1252.9px;top:569.98px;font-size:12px;color:#6c6c6c;font-weight:400;letter-spacing:0px;">N/A</div>
<div class="t" style="left:1458.9px;top:569.98px;font-size:12px;color:#6c6c6c;font-weight:400;letter-spacing:0.3px;">HalfLength</div>
<div class="t" style="left:1686px;top:569.98px;font-size:12px;color:#6c6c6c;font-weight:400;letter-spacing:0px;">0</div>
<div style="position:absolute;left:19px;top:590.76px;width:1898px;height:31.62px;background:#f3f3f3"></div>
<svg style="position:absolute;left:26px;top:599.66px" width="13" height="13" viewBox="0 0 13 13"><path d="M6.5 0.5 V12.5 M0.5 6.5 H12.5" stroke="#2e2e2e" stroke-width="1.9"/></svg>
<div class="t" style="left:57.4px;top:601.60px;font-size:12px;color:#6c6c6c;font-weight:400;letter-spacing:-0.22px;">PCIeSSD BaySlot 2:1</div>
<div class="t" style="left:458.7px;top:601.60px;font-size:12px;color:#6c6c6c;font-weight:400;letter-spacing:-0.2px;">Yes</div>
<div class="t" style="left:666.4px;top:601.60px;font-size:12px;color:#6c6c6c;font-weight:400;letter-spacing:0px;">4</div>
<div class="t" style="left:807px;top:601.60px;font-size:12px;color:#6c6c6c;font-weight:400;letter-spacing:0px;">True</div>
<div class="t" style="left:1079.6px;top:601.60px;font-size:12px;color:#6c6c6c;font-weight:400;letter-spacing:0px;">Enabled</div>
<div class="t" style="left:1252.9px;top:601.60px;font-size:12px;color:#6c6c6c;font-weight:400;letter-spacing:0px;">N/A</div>
<div class="t" style="left:1458.9px;top:601.60px;font-size:12px;color:#6c6c6c;font-weight:400;letter-spacing:0.3px;">HalfLength</div>
<div class="t" style="left:1686px;top:601.60px;font-size:12px;color:#6c6c6c;font-weight:400;letter-spacing:0px;">0</div>
<svg style="position:absolute;left:26px;top:631.28px" width="13" height="13" viewBox="0 0 13 13"><path d="M6.5 0.5 V12.5 M0.5 6.5 H12.5" stroke="#2e2e2e" stroke-width="1.9"/></svg>
<div class="t" style="left:57.4px;top:633.22px;font-size:12px;color:#6c6c6c;font-weight:400;letter-spacing:-0.22px;">PCIeSSD BaySlot 3:1</div>
<div class="t" style="left:458.7px;top:633.22px;font-size:12px;color:#6c6c6c;font-weight:400;letter-spacing:-0.2px;">Yes</div>
<div class="t" style="left:666.4px;top:633.22px;font-size:12px;color:#6c6c6c;font-weight:400;letter-spacing:0px;">4</div>
<div class="t" style="left:807px;top:633.22px;font-size:12px;color:#6c6c6c;font-weight:400;letter-spacing:0px;">True</div>
<div class="t" style="left:1079.6px;top:633.22px;font-size:12px;color:#6c6c6c;font-weight:400;letter-spacing:0px;">Enabled</div>
<div class="t" style="left:1252.9px;top:633.22px;font-size:12px;color:#6c6c6c;font-weight:400;letter-spacing:0px;">N/A</div>
<div class="t" style="left:1458.9px;top:633.22px;font-size:12px;color:#6c6c6c;font-weight:400;letter-spacing:0.3px;">HalfLength</div>
<div class="t" style="left:1686px;top:633.22px;font-size:12px;color:#6c6c6c;font-weight:400;letter-spacing:0px;">0</div>
<div style="position:absolute;left:19px;top:654.00px;width:1898px;height:31.62px;background:#f3f3f3"></div>
<svg style="position:absolute;left:26px;top:662.90px" width="13" height="13" viewBox="0 0 13 13"><path d="M6.5 0.5 V12.5 M0.5 6.5 H12.5" stroke="#2e2e2e" stroke-width="1.9"/></svg>
<div class="t" style="left:57.4px;top:664.84px;font-size:12px;color:#6c6c6c;font-weight:400;letter-spacing:-0.22px;">PCIeSSD BaySlot 4:1</div>
<div class="t" style="left:458.7px;top:664.84px;font-size:12px;color:#6c6c6c;font-weight:400;letter-spacing:-0.2px;">Yes</div>
<div class="t" style="left:666.4px;top:664.84px;font-size:12px;color:#6c6c6c;font-weight:400;letter-spacing:0px;">4</div>
<div class="t" style="left:807px;top:664.84px;font-size:12px;color:#6c6c6c;font-weight:400;letter-spacing:0px;">True</div>
<div class="t" style="left:1079.6px;top:664.84px;font-size:12px;color:#6c6c6c;font-weight:400;letter-spacing:0px;">Enabled</div>
<div class="t" style="left:1252.9px;top:664.84px;font-size:12px;color:#6c6c6c;font-weight:400;letter-spacing:0px;">N/A</div>
<div class="t" style="left:1458.9px;top:664.84px;font-size:12px;color:#6c6c6c;font-weight:400;letter-spacing:0.3px;">HalfLength</div>
<div class="t" style="left:1686px;top:664.84px;font-size:12px;color:#6c6c6c;font-weight:400;letter-spacing:0px;">0</div>
<svg style="position:absolute;left:26px;top:694.52px" width="13" height="13" viewBox="0 0 13 13"><path d="M6.5 0.5 V12.5 M0.5 6.5 H12.5" stroke="#2e2e2e" stroke-width="1.9"/></svg>
<div class="t" style="left:57.4px;top:696.46px;font-size:12px;color:#6c6c6c;font-weight:400;letter-spacing:-0.22px;">PCIeSSD BaySlot 5:1</div>
<div class="t" style="left:458.7px;top:696.46px;font-size:12px;color:#6c6c6c;font-weight:400;letter-spacing:-0.2px;">Yes</div>
<div class="t" style="left:666.4px;top:696.46px;font-size:12px;color:#6c6c6c;font-weight:400;letter-spacing:0px;">4</div>
<div class="t" style="left:807px;top:696.46px;font-size:12px;color:#6c6c6c;font-weight:400;letter-spacing:0px;">True</div>
<div class="t" style="left:1079.6px;top:696.46px;font-size:12px;color:#6c6c6c;font-weight:400;letter-spacing:0px;">Enabled</div>
<div class="t" style="left:1252.9px;top:696.46px;font-size:12px;color:#6c6c6c;font-weight:400;letter-spacing:0px;">N/A</div>
<div class="t" style="left:1458.9px;top:696.46px;font-size:12px;color:#6c6c6c;font-weight:400;letter-spacing:0.3px;">HalfLength</div>
<div class="t" style="left:1686px;top:696.46px;font-size:12px;color:#6c6c6c;font-weight:400;letter-spacing:0px;">0</div>
<div style="position:absolute;left:19px;top:717.24px;width:1898px;height:31.62px;background:#f3f3f3"></div>
<svg style="position:absolute;left:26px;top:726.14px" width="13" height="13" viewBox="0 0 13 13"><path d="M6.5 0.5 V12.5 M0.5 6.5 H12.5" stroke="#2e2e2e" stroke-width="1.9"/></svg>
<div class="t" style="left:57.4px;top:728.08px;font-size:12px;color:#6c6c6c;font-weight:400;letter-spacing:-0.22px;">PCIeSSD BaySlot 6:1</div>
<div class="t" style="left:458.7px;top:728.08px;font-size:12px;color:#6c6c6c;font-weight:400;letter-spacing:0.5px;">No</div>
<div class="t" style="left:666.4px;top:728.08px;font-size:12px;color:#6c6c6c;font-weight:400;letter-spacing:0px;">4</div>
<div class="t" style="left:807px;top:728.08px;font-size:12px;color:#6c6c6c;font-weight:400;letter-spacing:0px;">True</div>
<div class="t" style="left:1079.6px;top:728.08px;font-size:12px;color:#6c6c6c;font-weight:400;letter-spacing:0px;">Enabled</div>
<div class="t" style="left:1252.9px;top:728.08px;font-size:12px;color:#6c6c6c;font-weight:400;letter-spacing:0px;">N/A</div>
<div class="t" style="left:1458.9px;top:728.08px;font-size:12px;color:#6c6c6c;font-weight:400;letter-spacing:0.3px;">HalfLength</div>
<div class="t" style="left:1686px;top:728.08px;font-size:12px;color:#6c6c6c;font-weight:400;letter-spacing:0px;">N/A</div>
<svg style="position:absolute;left:26px;top:757.76px" width="13" height="13" viewBox="0 0 13 13"><path d="M6.5 0.5 V12.5 M0.5 6.5 H12.5" stroke="#2e2e2e" stroke-width="1.9"/></svg>
<div class="t" style="left:57.4px;top:759.70px;font-size:12px;color:#6c6c6c;font-weight:400;letter-spacing:-0.22px;">PCIeSSD BaySlot 7:1</div>
<div class="t" style="left:458.7px;top:759.70px;font-size:12px;color:#6c6c6c;font-weight:400;letter-spacing:0.5px;">No</div>
<div class="t" style="left:666.4px;top:759.70px;font-size:12px;color:#6c6c6c;font-weight:400;letter-spacing:0px;">4</div>
<div class="t" style="left:807px;top:759.70px;font-size:12px;color:#6c6c6c;font-weight:400;letter-spacing:0px;">True</div>
<div class="t" style="left:1079.6px;top:759.70px;font-size:12px;color:#6c6c6c;font-weight:400;letter-spacing:0px;">Enabled</div>
<div class="t" style="left:1252.9px;top:759.70px;font-size:12px;color:#6c6c6c;font-weight:400;letter-spacing:0px;">N/A</div>
<div class="t" style="left:1458.9px;top:759.70px;font-size:12px;color:#6c6c6c;font-weight:400;letter-spacing:0.3px;">HalfLength</div>
<div class="t" style="left:1686px;top:759.70px;font-size:12px;color:#6c6c6c;font-weight:400;letter-spacing:0px;">N/A</div>
<div style="position:absolute;left:19px;top:780.48px;width:1898px;height:31.62px;background:#f3f3f3"></div>
<svg style="position:absolute;left:26px;top:789.38px" width="13" height="13" viewBox="0 0 13 13"><path d="M6.5 0.5 V12.5 M0.5 6.5 H12.5" stroke="#2e2e2e" stroke-width="1.9"/></svg>
<div class="t" style="left:57.4px;top:791.32px;font-size:12px;color:#6c6c6c;font-weight:400;letter-spacing:-0.22px;">PCIeSSD BaySlot 8:2</div>
<div class="t" style="left:458.7px;top:791.32px;font-size:12px;color:#6c6c6c;font-weight:400;letter-spacing:0.5px;">No</div>
<div class="t" style="left:666.4px;top:791.32px;font-size:12px;color:#6c6c6c;font-weight:400;letter-spacing:0px;">4</div>
<div class="t" style="left:807px;top:791.32px;font-size:12px;color:#6c6c6c;font-weight:400;letter-spacing:0px;">True</div>
<div class="t" style="left:1079.6px;top:791.32px;font-size:12px;color:#6c6c6c;font-weight:400;letter-spacing:0px;">Enabled</div>
<div class="t" style="left:1252.9px;top:791.32px;font-size:12px;color:#6c6c6c;font-weight:400;letter-spacing:0px;">N/A</div>
<div class="t" style="left:1458.9px;top:791.32px;font-size:12px;color:#6c6c6c;font-weight:400;letter-spacing:0.3px;">HalfLength</div>
<div class="t" style="left:1686px;top:791.32px;font-size:12px;color:#6c6c6c;font-weight:400;letter-spacing:0px;">N/A</div>
<svg style="position:absolute;left:26px;top:821.00px" width="13" height="13" viewBox="0 0 13 13"><path d="M6.5 0.5 V12.5 M0.5 6.5 H12.5" stroke="#2e2e2e" stroke-width="1.9"/></svg>
<div class="t" style="left:57.4px;top:822.94px;font-size:12px;color:#6c6c6c;font-weight:400;letter-spacing:-0.22px;">PCIeSSD BaySlot 9:2</div>
<div class="t" style="left:458.7px;top:822.94px;font-size:12px;color:#6c6c6c;font-weight:400;letter-spacing:0.5px;">No</div>
<div class="t" style="left:666.4px;top:822.94px;font-size:12px;color:#6c6c6c;font-weight:400;letter-spacing:0px;">4</div>
<div class="t" style="left:807px;top:822.94px;font-size:12px;color:#6c6c6c;font-weight:400;letter-spacing:0px;">True</div>
<div class="t" style="left:1079.6px;top:822.94px;font-size:12px;color:#6c6c6c;font-weight:400;letter-spacing:0px;">Enabled</div>
<div class="t" style="left:1252.9px;top:822.94px;font-size:12px;color:#6c6c6c;font-weight:400;letter-spacing:0px;">N/A</div>
<div class="t" style="left:1458.9px;top:822.94px;font-size:12px;color:#6c6c6c;font-weight:400;letter-spacing:0.3px;">HalfLength</div>
<div class="t" style="left:1686px;top:822.94px;font-size:12px;color:#6c6c6c;font-weight:400;letter-spacing:0px;">N/A</div>
<div style="position:absolute;left:19px;top:843.72px;width:1898px;height:31.62px;background:#f3f3f3"></div>
<svg style="position:absolute;left:26px;top:852.62px" width="13" height="13" viewBox="0 0 13 13"><path d="M6.5 0.5 V12.5 M0.5 6.5 H12.5" stroke="#2e2e2e" stroke-width="1.9"/></svg>
<div class="t" style="left:57.4px;top:854.56px;font-size:12px;color:#6c6c6c;font-weight:400;letter-spacing:-0.22px;">PCIeSSD BaySlot 10:2</div>
<div class="t" style="left:458.7px;top:854.56px;font-size:12px;color:#6c6c6c;font-weight:400;letter-spacing:0.5px;">No</div>
<div class="t" style="left:666.4px;top:854.56px;font-size:12px;color:#6c6c6c;font-weight:400;letter-spacing:0px;">4</div>
<div class="t" style="left:807px;top:854.56px;font-size:12px;color:#6c6c6c;font-weight:400;letter-spacing:0px;">True</div>
<div class="t" style="left:1079.6px;top:854.56px;font-size:12px;color:#6c6c6c;font-weight:400;letter-spacing:0px;">Enabled</div>
<div class="t" style="left:1252.9px;top:854.56px;font-size:12px;color:#6c6c6c;font-weight:400;letter-spacing:0px;">N/A</div>
<div class="t" style="left:1458.9px;top:854.56px;font-size:12px;color:#6c6c6c;font-weight:400;letter-spacing:0.3px;">HalfLength</div>
<div class="t" style="left:1686px;top:854.56px;font-size:12px;color:#6c6c6c;font-weight:400;letter-spacing:0px;">N/A</div>
<svg style="position:absolute;left:26px;top:884.24px" width="13" height="13" viewBox="0 0 13 13"><path d="M6.5 0.5 V12.5 M0.5 6.5 H12.5" stroke="#2e2e2e" stroke-width="1.9"/></svg>
<div class="t" style="left:57.4px;top:886.18px;font-size:12px;color:#6c6c6c;font-weight:400;letter-spacing:-0.22px;">PCIeSSD BaySlot 11:2</div>
<div class="t" style="left:458.7px;top:886.18px;font-size:12px;color:#6c6c6c;font-weight:400;letter-spacing:0.5px;">No</div>
<div class="t" style="left:666.4px;top:886.18px;font-size:12px;color:#6c6c6c;font-weight:400;letter-spacing:0px;">4</div>
<div class="t" style="left:807px;top:886.18px;font-size:12px;color:#6c6c6c;font-weight:400;letter-spacing:0px;">True</div>
<div class="t" style="left:1079.6px;top:886.18px;font-size:12px;color:#6c6c6c;font-weight:400;letter-spacing:0px;">Enabled</div>
<div class="t" style="left:1252.9px;top:886.18px;font-size:12px;color:#6c6c6c;font-weight:400;letter-spacing:0px;">N/A</div>
<div class="t" style="left:1458.9px;top:886.18px;font-size:12px;color:#6c6c6c;font-weight:400;letter-spacing:0.3px;">HalfLength</div>
<div class="t" style="left:1686px;top:886.18px;font-size:12px;color:#6c6c6c;font-weight:400;letter-spacing:0px;">N/A</div>
<div style="position:absolute;left:19px;top:906.96px;width:1898px;height:31.62px;background:#f3f3f3"></div>
<svg style="position:absolute;left:26px;top:915.86px" width="13" height="13" viewBox="0 0 13 13"><path d="M6.5 0.5 V12.5 M0.5 6.5 H12.5" stroke="#2e2e2e" stroke-width="1.9"/></svg>
<div class="t" style="left:57.4px;top:917.80px;font-size:12px;color:#6c6c6c;font-weight:400;letter-spacing:-0.22px;">PCIeSSD BaySlot 12:2</div>
<div class="t" style="left:458.7px;top:917.80px;font-size:12px;color:#6c6c6c;font-weight:400;letter-spacing:0.5px;">No</div>
<div class="t" style="left:666.4px;top:917.80px;font-size:12px;color:#6c6c6c;font-weight:400;letter-spacing:0px;">4</div>
<div class="t" style="left:807px;top:917.80px;font-size:12px;color:#6c6c6c;font-weight:400;letter-spacing:0px;">True</div>
<div class="t" style="left:1079.6px;top:917.80px;font-size:12px;color:#6c6c6c;font-weight:400;letter-spacing:0px;">Enabled</div>
<div class="t" style="left:1252.9px;top:917.80px;font-size:12px;color:#6c6c6c;font-weight:400;letter-spacing:0px;">N/A</div>
<div class="t" style="left:1458.9px;top:917.80px;font-size:12px;color:#6c6c6c;font-weight:400;letter-spacing:0.3px;">HalfLength</div>
<div class="t" style="left:1686px;top:917.80px;font-size:12px;color:#6c6c6c;font-weight:400;letter-spacing:0px;">N/A</div>
<svg style="position:absolute;left:26px;top:947.48px" width="13" height="13" viewBox="0 0 13 13"><path d="M6.5 0.5 V12.5 M0.5 6.5 H12.5" stroke="#2e2e2e" stroke-width="1.9"/></svg>
<div class="t" style="left:57.4px;top:949.42px;font-size:12px;color:#6c6c6c;font-weight:400;letter-spacing:-0.22px;">PCIeSSD BaySlot 13:2</div>
<div class="t" style="left:458.7px;top:949.42px;font-size:12px;color:#6c6c6c;font-weight:400;letter-spacing:0.5px;">No</div>
<div class="t" style="left:666.4px;top:949.42px;font-size:12px;color:#6c6c6c;font-weight:400;letter-spacing:0px;">4</div>
<div class="t" style="left:807px;top:949.42px;font-size:12px;color:#6c6c6c;font-weight:400;letter-spacing:0px;">True</div>
<div class="t" style="left:1079.6px;top:949.42px;font-size:12px;color:#6c6c6c;font-weight:400;letter-spacing:0px;">Enabled</div>
<div class="t" style="left:1252.9px;top:949.42px;font-size:12px;color:#6c6c6c;font-weight:400;letter-spacing:0px;">N/A</div>
<div class="t" style="left:1458.9px;top:949.42px;font-size:12px;color:#6c6c6c;font-weight:400;letter-spacing:0.3px;">HalfLength</div>
<div class="t" style="left:1686px;top:949.42px;font-size:12px;color:#6c6c6c;font-weight:400;letter-spacing:0px;">N/A</div>
<div style="position:absolute;left:19px;top:970.20px;width:1898px;height:31.62px;background:#f3f3f3"></div>
<svg style="position:absolute;left:26px;top:979.10px" width="13" height="13" viewBox="0 0 13 13"><path d="M6.5 0.5 V12.5 M0.5 6.5 H12.5" stroke="#2e2e2e" stroke-width="1.9"/></svg>
<div class="t" style="left:57.4px;top:981.04px;font-size:12px;color:#6c6c6c;font-weight:400;letter-spacing:-0.22px;">PCIeSSD BaySlot 14:2</div>
<div class="t" style="left:458.7px;top:981.04px;font-size:12px;color:#6c6c6c;font-weight:400;letter-spacing:0.5px;">No</div>
<div class="t" style="left:666.4px;top:981.04px;font-size:12px;color:#6c6c6c;font-weight:400;letter-spacing:0px;">4</div>
<div class="t" style="left:807px;top:981.04px;font-size:12px;color:#6c6c6c;font-weight:400;letter-spacing:0px;">True</div>
<div class="t" style="left:1079.6px;top:981.04px;font-size:12px;color:#6c6c6c;font-weight:400;letter-spacing:0px;">Enabled</div>
<div class="t" style="left:1252.9px;top:981.04px;font-size:12px;color:#6c6c6c;font-weight:400;letter-spacing:0px;">N/A</div>
<div class="t" style="left:1458.9px;top:981.04px;font-size:12px;color:#6c6c6c;font-weight:400;letter-spacing:0.3px;">HalfLength</div>
<div class="t" style="left:1686px;top:981.04px;font-size:12px;color:#6c6c6c;font-weight:400;letter-spacing:0px;">N/A</div>
<svg style="position:absolute;left:26px;top:1010.72px" width="13" height="13" viewBox="0 0 13 13"><path d="M6.5 0.5 V12.5 M0.5 6.5 H12.5" stroke="#2e2e2e" stroke-width="1.9"/></svg>
<div class="t" style="left:57.4px;top:1012.66px;font-size:12px;color:#6c6c6c;font-weight:400;letter-spacing:-0.22px;">PCIeSSD BaySlot 15:2</div>
<div class="t" style="left:458.7px;top:1012.66px;font-size:12px;color:#6c6c6c;font-weight:400;letter-spacing:0.5px;">No</div>
<div class="t" style="left:666.4px;top:1012.66px;font-size:12px;color:#6c6c6c;font-weight:400;letter-spacing:0px;">4</div>
<div class="t" style="left:807px;top:1012.66px;font-size:12px;color:#6c6c6c;font-weight:400;letter-spacing:0px;">True</div>
<div class="t" style="left:1079.6px;top:1012.66px;font-size:12px;color:#6c6c6c;font-weight:400;letter-spacing:0px;">Enabled</div>
<div class="t" style="left:1252.9px;top:1012.66px;font-size:12px;color:#6c6c6c;font-weight:400;letter-spacing:0px;">N/A</div>
<div class="t" style="left:1458.9px;top:1012.66px;font-size:12px;color:#6c6c6c;font-weight:400;letter-spacing:0.3px;">HalfLength</div>
<div class="t" style="left:1686px;top:1012.66px;font-size:12px;color:#6c6c6c;font-weight:400;letter-spacing:0px;">N/A</div>
<div style="position:absolute;left:1917px;top:385px;width:3px;height:140px;background:#9cc7df;border-radius:2px 0 0 2px"></div>
<div style="position:absolute;left:1917px;top:593px;width:3px;height:37px;background:#9cc7df;border-radius:2px 0 0 2px"></div>
</body></html>
